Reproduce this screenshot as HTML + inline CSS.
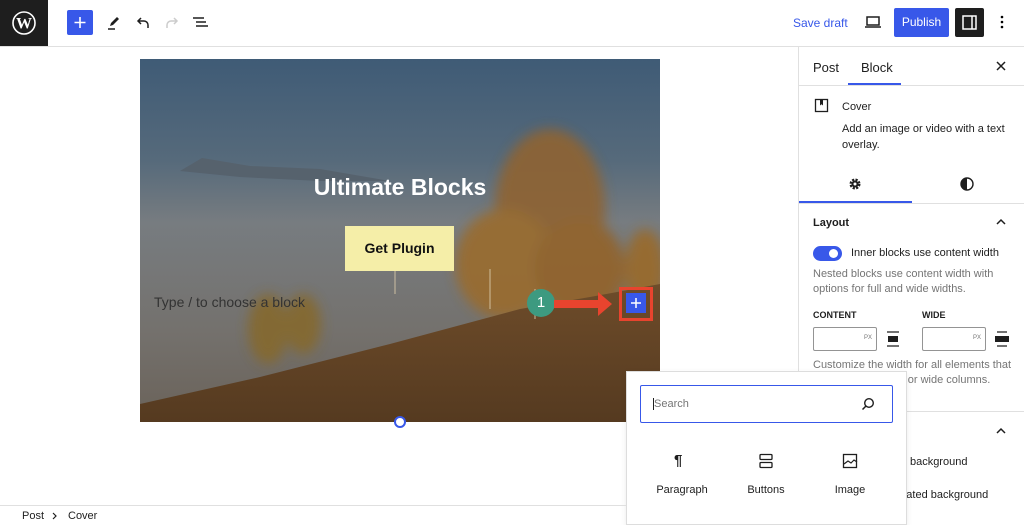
<!DOCTYPE html>
<html><head><meta charset="utf-8"><style>
*{box-sizing:border-box;margin:0;padding:0}
body{width:1024px;height:525px;overflow:hidden;background:#fff;font-family:"Liberation Sans",sans-serif;color:#1e1e1e;position:relative}
.abs{position:absolute}
.t{font-size:13px}
.g{color:#757575;font-size:11px;line-height:15px}
</style></head><body>
<!-- top bar -->
<div class="abs" style="left:0;top:0;width:48px;height:47px;background:#1e1e1e"></div>
<svg class="abs" style="left:12px;top:11px" width="24" height="24" viewBox="0 0 24 24"><circle cx="12" cy="12" r="11" fill="none" stroke="#fff" stroke-width="1.6"/><text x="12" y="17.5" text-anchor="middle" font-family="Liberation Serif" font-weight="bold" font-size="16" fill="#fff">W</text></svg>
<div class="abs" style="left:0;top:46px;width:1024px;height:1px;background:#e0e0e0"></div>
<div class="abs" style="left:67px;top:10px;width:26px;height:25px;background:#3858e9;border-radius:2px"></div>
<svg class="abs" style="left:67px;top:10px" width="26" height="25"><path d="M13 7v11M7.5 12.5h11" stroke="#fff" stroke-width="1.6"/></svg>
<svg class="abs" style="left:104px;top:12px" width="20" height="20"><path d="M6 14l1-3 6-6 2 2-6 6z" fill="#1e1e1e"/><path d="M4 17h7" stroke="#1e1e1e" stroke-width="1.5"/></svg>
<svg class="abs" style="left:133px;top:12px" width="20" height="20"><path d="M15 16v-3a4 4 0 0 0-4-4H5M8 6L5 9l3 3" fill="none" stroke="#1e1e1e" stroke-width="1.5"/></svg>
<svg class="abs" style="left:162px;top:12px" width="20" height="20"><path d="M5 16v-3a4 4 0 0 1 4-4h6M12 6l3 3-3 3" fill="none" stroke="#ccc" stroke-width="1.5"/></svg>
<svg class="abs" style="left:191px;top:12px" width="20" height="20"><path d="M2 6h11M5 10h10M5 14h12" stroke="#1e1e1e" stroke-width="1.5"/></svg>
<div class="abs t" style="left:793px;top:16px;color:#3858e9;font-size:12px">Save draft</div>
<svg class="abs" style="left:863px;top:12px" width="20" height="20"><rect x="4" y="5" width="12" height="8" fill="none" stroke="#1e1e1e" stroke-width="1.5"/><path d="M2 15h16" stroke="#1e1e1e" stroke-width="1.5"/></svg>
<div class="abs" style="left:894px;top:8px;width:55px;height:29px;background:#3858e9;border-radius:2px;color:#fff;font-size:12px;text-align:center;line-height:29px">Publish</div>
<div class="abs" style="left:955px;top:8px;width:29px;height:29px;background:#1e1e1e;border-radius:2px"></div>
<svg class="abs" style="left:955px;top:8px" width="29" height="29"><rect x="8" y="8" width="13" height="13" fill="none" stroke="#fff" stroke-width="1.5"/><path d="M17 8v13" stroke="#fff" stroke-width="1.5"/></svg>
<svg class="abs" style="left:992px;top:12px" width="20" height="20"><circle cx="10" cy="5" r="1.3"/><circle cx="10" cy="10" r="1.3"/><circle cx="10" cy="15" r="1.3"/></svg>

<!-- canvas cover -->
<svg class="abs" style="left:140px;top:59px" width="520" height="363" viewBox="0 0 520 363">
<defs>
<linearGradient id="sky" x1="0" y1="0" x2="0" y2="1"><stop offset="0" stop-color="#3f5b76"/><stop offset="0.28" stop-color="#566a7b"/><stop offset="0.45" stop-color="#777c80"/><stop offset="0.75" stop-color="#74716d"/><stop offset="1" stop-color="#6a6259"/></linearGradient>
<linearGradient id="hill" x1="0" y1="0" x2="0" y2="1"><stop offset="0" stop-color="#6e4c2a"/><stop offset="1" stop-color="#553a20"/></linearGradient>
<filter id="bl"><feGaussianBlur stdDeviation="6"/></filter>
</defs>
<rect width="520" height="363" fill="url(#sky)"/>
<path d="M40 112 L62 99 L110 107 L180 110 L250 122 L180 122 L100 118Z" fill="#56626d"/>
<g filter="url(#bl)" opacity="0.9">
<ellipse cx="410" cy="150" rx="55" ry="80" fill="#8f6430"/>
<ellipse cx="365" cy="205" rx="50" ry="55" fill="#9a6c2e"/>
<ellipse cx="440" cy="210" rx="45" ry="50" fill="#93642c"/>
<ellipse cx="505" cy="210" rx="20" ry="40" fill="#9a6a2a"/>
<ellipse cx="128" cy="270" rx="20" ry="35" fill="#85692f"/>
<ellipse cx="163" cy="265" rx="18" ry="30" fill="#85692f"/>
</g>
<path d="M0 345 L120 318 L250 285 L380 250 L450 238 L520 225 L520 363 L0 363Z" fill="url(#hill)"/>
<path d="M350 210v40M395 230v30M255 190v45" stroke="#d8c8a8" stroke-width="1.5" opacity="0.6"/>
</svg>
<div class="abs" style="left:140px;top:174px;width:520px;text-align:center;color:#fff;font-size:23px;font-weight:bold">Ultimate Blocks</div>
<div class="abs" style="left:345px;top:226px;width:109px;height:45px;background:#f5eea8;text-align:center;line-height:45px;font-weight:bold;font-size:14px;color:#111">Get Plugin</div>
<div class="abs" style="left:154px;top:294px;color:#333;font-size:14px">Type / to choose a block</div>
<div class="abs" style="left:527px;top:289px;width:28px;height:28px;border-radius:50%;background:#3d9a80;color:#fff;text-align:center;line-height:28px;font-size:15px">1</div>
<svg class="abs" style="left:550px;top:288px" width="70" height="32"><path d="M4 12h44v-8l14 12-14 12v-8H4z" fill="#e8442e"/></svg>
<div class="abs" style="left:619px;top:287px;width:34px;height:34px;border:3px solid #e8442e"></div>
<div class="abs" style="left:626px;top:293px;width:20px;height:20px;background:#3858e9"></div>
<svg class="abs" style="left:626px;top:293px" width="20" height="20"><path d="M10 5v10M5 10h10" stroke="#fff" stroke-width="1.5"/></svg>
<div class="abs" style="left:394px;top:416px;width:12px;height:12px;border-radius:50%;background:#fff;border:2px solid #3858e9"></div>

<!-- sidebar -->
<div class="abs" style="left:798px;top:47px;width:1px;height:458px;background:#e0e0e0"></div>
<div class="abs t" style="left:813px;top:60px">Post</div>
<div class="abs t" style="left:861px;top:60px">Block</div>
<div class="abs" style="left:848px;top:83px;width:53px;height:2px;background:#3858e9"></div>
<div class="abs" style="left:799px;top:85px;width:225px;height:1px;background:#e0e0e0"></div>
<svg class="abs" style="left:994px;top:59px" width="14" height="14"><path d="M3 3l8 8M11 3l-8 8" stroke="#1e1e1e" stroke-width="1.5"/></svg>
<svg class="abs" style="left:814px;top:98px" width="16" height="16"><rect x="1.5" y="1.5" width="12" height="12" fill="none" stroke="#1e1e1e" stroke-width="1.3"/><path d="M6 1.5v6l1.5-1.3 1.5 1.3v-6z" fill="#1e1e1e"/></svg>
<div class="abs t" style="left:842px;top:101px;font-size:11px">Cover</div>
<div class="abs" style="left:842px;top:121px;font-size:11px;line-height:16px;width:170px">Add an image or video with a text overlay.</div>
<svg class="abs" style="left:848px;top:177px" width="14" height="14"><circle cx="7" cy="7" r="4" fill="none" stroke="#1e1e1e" stroke-width="3" stroke-dasharray="2 1.2"/><circle cx="7" cy="7" r="3.5" fill="#1e1e1e"/><circle cx="7" cy="7" r="1.5" fill="#fff"/></svg>
<svg class="abs" style="left:960px;top:177px" width="14" height="14"><circle cx="7" cy="7" r="6" fill="none" stroke="#1e1e1e" stroke-width="1.4"/><path d="M7 1a6 6 0 0 0 0 12z" fill="#1e1e1e"/></svg>
<div class="abs" style="left:799px;top:201px;width:113px;height:2px;background:#3858e9"></div>
<div class="abs" style="left:799px;top:203px;width:225px;height:1px;background:#e0e0e0"></div>
<div class="abs" style="left:813px;top:217px;font-size:11px;font-weight:bold">Layout</div>
<svg class="abs" style="left:995px;top:217px" width="12" height="10"><path d="M2 7l4-4 4 4" fill="none" stroke="#1e1e1e" stroke-width="1.5"/></svg>
<div class="abs" style="left:813px;top:246px;width:29px;height:15px;border-radius:8px;background:#3858e9"></div>
<div class="abs" style="left:829px;top:249px;width:9px;height:9px;border-radius:50%;background:#fff"></div>
<div class="abs" style="left:851px;top:247px;font-size:11px">Inner blocks use content width</div>
<div class="abs g" style="left:813px;top:267px;width:195px">Nested blocks use content width with options for full and wide widths.</div>
<div class="abs" style="left:813px;top:310px;font-size:9px;font-weight:bold">CONTENT</div>
<div class="abs" style="left:922px;top:310px;font-size:9px;font-weight:bold">WIDE</div>
<div class="abs" style="left:813px;top:327px;width:64px;height:24px;border:1px solid #949494;border-radius:2px"></div>
<div class="abs" style="left:864px;top:335px;font-size:6px;color:#757575">PX</div>
<div class="abs" style="left:922px;top:327px;width:64px;height:24px;border:1px solid #949494;border-radius:2px"></div>
<div class="abs" style="left:973px;top:335px;font-size:6px;color:#757575">PX</div>
<svg class="abs" style="left:885px;top:330px" width="16" height="18"><path d="M2 2h12M2 16h12" stroke="#1e1e1e" stroke-width="1.3"/><rect x="3" y="6" width="10" height="6" fill="#1e1e1e"/></svg>
<svg class="abs" style="left:994px;top:330px" width="16" height="18"><path d="M3 2h10M3 16h10" stroke="#1e1e1e" stroke-width="1.3"/><rect x="1" y="6" width="14" height="6" fill="#1e1e1e"/></svg>
<div class="abs g" style="left:813px;top:358px;width:205px">Customize the width for all elements that fit within the center or wide columns.</div>
<div class="abs" style="left:799px;top:411px;width:225px;height:1px;background:#e0e0e0"></div>
<svg class="abs" style="left:995px;top:426px" width="12" height="10"><path d="M2 7l4-4 4 4" fill="none" stroke="#1e1e1e" stroke-width="1.5"/></svg>
<div class="abs" style="left:880px;top:456px;font-size:11px">Fixed background</div>
<div class="abs" style="left:880px;top:489px;font-size:11px">Repeated background</div>

<!-- inserter popover -->
<div class="abs" style="left:626px;top:371px;width:281px;height:154px;background:#fff;border:1px solid #ddd;box-shadow:0 2px 6px rgba(0,0,0,.08)"></div>
<div class="abs" style="left:640px;top:385px;width:253px;height:38px;border:1.5px solid #3858e9;border-radius:2px"></div>
<div class="abs" style="left:653px;top:398px;font-size:11px;color:#757575;border-left:1px solid #1e1e1e">Search</div>
<svg class="abs" style="left:860px;top:396px" width="16" height="16"><circle cx="9" cy="7" r="4.3" fill="none" stroke="#1e1e1e" stroke-width="1.4"/><path d="M6 10l-3.5 3.5" stroke="#1e1e1e" stroke-width="1.5"/></svg>
<div class="abs" style="left:674px;top:452px;font-size:15px;font-weight:bold">¶</div>
<svg class="abs" style="left:758px;top:453px" width="16" height="16"><rect x="2" y="1.5" width="12" height="5" rx="1" fill="none" stroke="#1e1e1e" stroke-width="1.3"/><rect x="2" y="9.5" width="12" height="5" rx="1" fill="none" stroke="#1e1e1e" stroke-width="1.3"/></svg>
<svg class="abs" style="left:842px;top:453px" width="16" height="16"><rect x="1.5" y="1.5" width="13" height="13" fill="none" stroke="#1e1e1e" stroke-width="1.3"/><path d="M2 11l4-3 3 2 3-3 3 2" fill="none" stroke="#1e1e1e" stroke-width="1.2"/></svg>
<div class="abs" style="left:646px;top:484px;width:72px;text-align:center;font-size:11px">Paragraph</div>
<div class="abs" style="left:730px;top:484px;width:72px;text-align:center;font-size:11px">Buttons</div>
<div class="abs" style="left:814px;top:484px;width:72px;text-align:center;font-size:11px">Image</div>

<!-- footer -->
<div class="abs" style="left:0;top:505px;width:626px;height:1px;background:#e0e0e0"></div>
<div class="abs" style="left:22px;top:510px;font-size:11px">Post</div>
<svg class="abs" style="left:51px;top:511px" width="8" height="10"><path d="M2 2l3 3-3 3" fill="none" stroke="#1e1e1e" stroke-width="1.2"/></svg>
<div class="abs" style="left:68px;top:510px;font-size:11px">Cover</div>
</body></html>
